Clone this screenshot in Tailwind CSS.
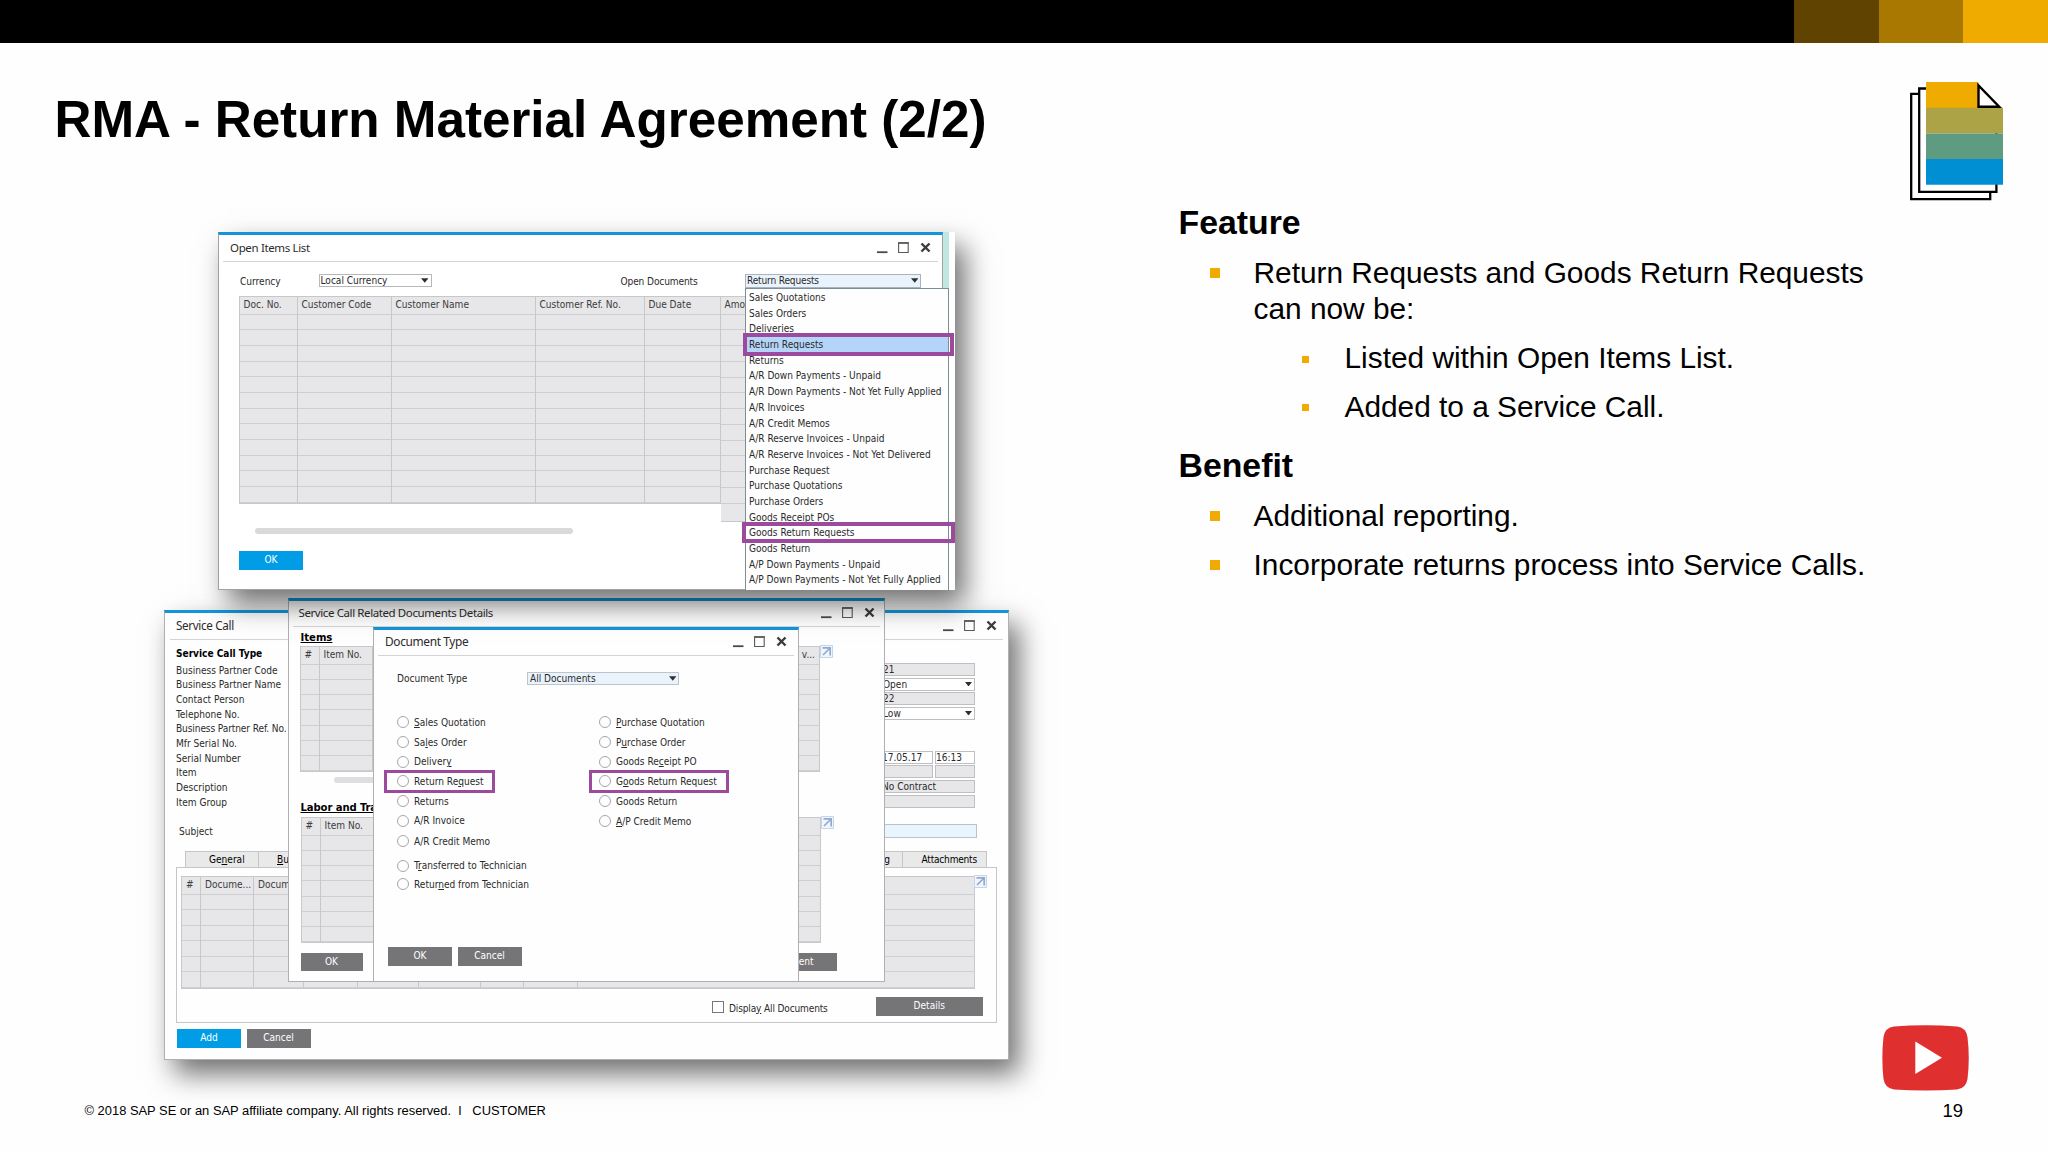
<!DOCTYPE html>
<html lang="en">
  <head>
    <meta charset="UTF-8" />
    <meta name="viewport" content="width=device-width, initial-scale=1.0" />
    <title>RMA - Return Material Agreement (2/2)</title>
    <script src="https://cdn.jsdelivr.net/npm/@tailwindcss/browser@4"></script>
    <style>
      .ui {
        font-family: "DejaVu Sans Condensed", "DejaVu Sans", sans-serif;
        font-stretch: condensed;
      }
      .win-title {
        font-family: "Noto Sans", "Open Sans", sans-serif;
      }
    </style>
  </head>
  <body class="bg-[#fefefe] text-black font-['Liberation_Sans',Arial,sans-serif]">
    <!-- shared icons -->
    <svg class="hidden">
      <symbol id="controls" viewBox="0 0 54 12">
        <path d="M0 10.2h10.5" stroke="#4a4a4a" stroke-width="1.8" />
        <path d="M21.6 .9h9.6v9.6h-9.6z" fill="none" stroke="#5a5a5a" stroke-width="1.1" />
        <path d="M21 1h10.8" stroke="#5a5a5a" stroke-width="1.6" />
        <path d="M44.500 1.500l8 8M52.500 1.500l-8 8" stroke="#3c3c3c" stroke-width="2.4" />
      </symbol>
      <symbol id="expand" viewBox="0 0 13 13">
        <path d="M.5 .5h12v12h-12z" fill="#f1f6fc" stroke="#c3d6ec" />
        <path d="M2.500 2.800h7.700v7.700M10 3L3 10" fill="none" stroke="#93a9d2" stroke-width="1.7" />
      </symbol>
      <symbol id="caret" viewBox="0 0 8 5">
        <path d="M0 0h8L4 5z" fill="#2f2f2f" />
      </symbol>
    </svg>

    <div class="relative flex h-[1152px] w-[2048px] flex-col overflow-hidden">
      <header class="flex h-[42.5px] shrink-0 bg-black">
        <div class="ml-auto w-[84.500px] bg-[#604300]"></div>
        <div class="w-[84.500px] bg-[#a97800]"></div>
        <div class="w-[85px] bg-[#f0ab00]"></div>
      </header>

      <div class="flex h-[159.500px] shrink-0 justify-between pl-[54.500px] pr-[44px]">
        <h1 class="mt-[47.500px] text-[51.200px] leading-[60px] font-bold whitespace-nowrap">RMA - Return Material Agreement (2/2)</h1>
        <svg class="mt-[37.500px] h-[122px] w-[95px]" viewBox="0 0 95 122">
          <path d="M2.200 13.800h79v105.400h-79z" fill="#fff" stroke="#000" stroke-width="2.300" />
          <path d="M10.200 8.500h77.200v103.300H10.200z" fill="#fff" stroke="#000" stroke-width="2.300" />
          <path d="M69 0h26v27.700H69z" fill="#fefefe" />
          <path d="M17 2h52.500v26H17z" fill="#f0ab00" />
          <path d="M17 27.700h77v25.700H17z" fill="#aba345" />
          <path d="M17 53.400h77v25.700H17z" fill="#5f9b80" />
          <path d="M17 79.100h77v25.700H17z" fill="#008fd3" />
          <path d="M69.500 5.500v21.200h20.700z" fill="#fff" stroke="#000" stroke-width="2.400" />
        </svg>
      </div>

      <div class="flex grow">
        <div class="w-[1178.500px] shrink-0"></div>
        <main class="flex w-[720px] flex-col text-[29.830px] leading-[35.500px]">
          <h2 class="text-[33.800px] leading-10 font-bold">Feature</h2>
          <ul class="mt-[13px] flex flex-col gap-[13.500px] pl-[31.500px]">
            <li class="flex"><span class="mt-[13px] h-[9.500px] w-[9.500px] bg-[#f0ab00]"></span><p class="ml-[34px]">Return Requests and Goods Return Requests<br />can now be:</p></li>
            <li class="flex pl-[91.500px]"><span class="mt-[16px] h-[7px] w-[7px] bg-[#f0ab00]"></span><p class="ml-9">Listed within Open Items List.</p></li>
            <li class="flex pl-[91.500px]"><span class="mt-[15.500px] h-[7px] w-[7px] bg-[#f0ab00]"></span><p class="ml-9">Added to a Service Call.</p></li>
          </ul>
          <h2 class="mt-[21px] text-[33.800px] leading-10 font-bold">Benefit</h2>
          <ul class="mt-[13px] flex flex-col gap-[13.500px] pl-[31.500px]">
            <li class="flex"><span class="mt-[13px] h-[9.500px] w-[9.500px] bg-[#f0ab00]"></span><p class="ml-[34px]">Additional reporting.</p></li>
            <li class="flex"><span class="mt-[13px] h-[9.500px] w-[9.500px] bg-[#f0ab00]"></span><p class="ml-[34px]">Incorporate returns process into Service Calls.</p></li>
          </ul>
        </main>
      </div>

      <footer class="flex h-[51px] shrink-0 justify-between pl-[84.500px] pr-[85px]">
        <p class="text-[12.920px] leading-5 whitespace-pre">© 2018 SAP SE or an SAP affiliate company. All rights reserved.  ǀ   CUSTOMER</p>
        <p class="text-[18.500px] leading-5">19</p>
      </footer>
      <svg class="absolute top-[1025px] left-[1882px] h-[66px] w-[87px]" viewBox="0 0 87 66">
        <path d="M12 1.500Q43.500 -.8 75 1.500Q84 2.500 85.500 12Q88 33 85.500 54Q84 63.500 75 64.500Q43.500 66.500 12 64.500Q3 63.500 1.500 54Q-.8 33 1.500 12Q3 2.500 12 1.500z" fill="#e02f2f" />
        <path d="M33.300 16.500v32.500L60 32.800z" fill="#fff" />
      </svg>

      <!-- Service Call window -->
      <section class="ui absolute top-[610px] left-[164px] h-[449.500px] w-[845px] border border-t-[3px] border-[#b0b0b0] border-t-[#1296db] bg-[#fefefe] text-[10.050px] text-[#2b2b2b] shadow-[10px_14px_26px_rgba(0,0,0,0.56)]">
        <div class="mx-[5px] flex h-[27px] items-center border-b border-[#d4d4d6] pr-[6px] pl-[6px]">
          <h3 class="win-title text-[11.700px] tracking-[-0.35px]">Service Call</h3>
          <svg class="ml-auto h-3 w-[54px]"><use href="#controls" /></svg>
        </div>
        <div class="flex h-[211px] justify-between pl-[11px]">
          <div class="pt-[7px] leading-[14.670px] whitespace-nowrap">
            <p class="mb-[2px] font-bold text-black">Service Call Type</p>
            <p>Business Partner Code</p>
            <p>Business Partner Name</p>
            <p>Contact Person</p>
            <p>Telephone No.</p>
            <p class="tracking-[-0.1px]">Business Partner Ref. No.</p>
            <p>Mfr Serial No.</p>
            <p>Serial Number</p>
            <p>Item</p>
            <p>Description</p>
            <p>Item Group</p>
            <p class="mt-[14.500px] ml-[3px]">Subject</p>
          </div>
          <div class="mr-[33px] flex w-[99px] flex-col gap-[1.700px] pt-[23px] leading-[11px]">
            <div class="h-[13px] border border-[#bfbfc2] bg-[#e7e6e8] pl-[6px]">21</div>
            <div class="flex h-[13px] items-center justify-between border border-[#bfbfc2] bg-white pr-[2px] pl-[6px]">Open<svg class="h-[4.500px] w-[7px]"><use href="#caret" /></svg></div>
            <div class="h-[13px] border border-[#bfbfc2] bg-[#e7e6e8] pl-[6px]">22</div>
            <div class="flex h-[13px] items-center justify-between border border-[#bfbfc2] bg-white pr-[2px] pl-[6px]">Low<svg class="h-[4.500px] w-[7px]"><use href="#caret" /></svg></div>
            <div class="mt-[29px] flex h-[13px] gap-[2px]">
              <div class="w-[57px] border border-[#bfbfc2] bg-white pl-[5px]">17.05.17</div>
              <div class="grow border border-[#bfbfc2] bg-white">16:13</div>
            </div>
            <div class="flex h-[13px] gap-[2px]">
              <div class="w-[57px] border border-[#bfbfc2] bg-[#e7e6e8]"></div>
              <div class="grow border border-[#bfbfc2] bg-[#e7e6e8]"></div>
            </div>
            <div class="h-[13px] border border-[#bfbfc2] bg-[#e7e6e8] pl-[5px]">No Contract</div>
            <div class="h-[13px] border border-[#bfbfc2] bg-[#e7e6e8]"></div>
            <div class="mt-[14px] -mr-[2px] h-[14px] border border-[#b5c4d0] bg-[#e8f5fd]"></div>
          </div>
        </div>
        <div class="mx-[11px] flex h-4 pr-[10px] pl-[9px] text-black">
          <div class="w-[74px] border border-b-0 border-[#c6c6c8] bg-[#e9e9ea] pl-[23px] leading-[15px]">Ge<u>n</u>eral</div>
          <div class="w-[300px] border-t border-[#c6c6c8] bg-[#e9e9ea] pl-[18px] leading-[15px]"><u>B</u>u</div>
          <div class="grow border-t border-r border-[#c6c6c8] bg-[#e9e9ea] pr-[12px] text-right leading-[15px]">g</div>
          <div class="w-[84px] border-t border-r border-[#c6c6c8] bg-[#e9e9ea] pl-[18.500px] tracking-[-0.2px] leading-[15px]">Attachments</div>
        </div>
        <div class="mx-[11px] h-[156px] border border-[#c6c6c8]">
          <div class="mt-[7.500px] ml-[4px] flex">
            <div class="flex h-[113px] w-[794px] border border-[#c8c8ca] bg-[#e7e6e8] leading-[15px] whitespace-nowrap text-[#3c3c3c]">
              <div class="flex w-[19px] flex-col border-r border-[#c8c8ca]"><p class="h-[18px] border-b border-[#cfcfd1] pl-1">#</p><div class="flex grow flex-col" data-rows="6"></div></div>
              <div class="flex w-[53px] flex-col border-r border-[#c8c8ca]"><p class="h-[18px] border-b border-[#cfcfd1] pl-1">Docume...</p><div class="flex grow flex-col" data-rows="6"></div></div>
              <div class="flex w-[50px] flex-col border-r border-[#c8c8ca]"><p class="h-[18px] border-b border-[#cfcfd1] pl-1">Docum</p><div class="flex grow flex-col" data-rows="6"></div></div>
              <div class="flex w-[54px] flex-col border-r border-[#c8c8ca]"><p class="h-[18px] border-b border-[#cfcfd1]"></p><div class="flex grow flex-col" data-rows="6"></div></div>
              <div class="flex w-[61px] flex-col border-r border-[#c8c8ca]"><p class="h-[18px] border-b border-[#cfcfd1]"></p><div class="flex grow flex-col" data-rows="6"></div></div>
              <div class="flex w-[62px] flex-col border-r border-[#c8c8ca]"><p class="h-[18px] border-b border-[#cfcfd1]"></p><div class="flex grow flex-col" data-rows="6"></div></div>
              <div class="flex w-[43px] flex-col border-r border-[#c8c8ca]"><p class="h-[18px] border-b border-[#cfcfd1]"></p><div class="flex grow flex-col" data-rows="6"></div></div>
              <div class="flex w-[54px] flex-col border-r border-[#c8c8ca]"><p class="h-[18px] border-b border-[#cfcfd1]"></p><div class="flex grow flex-col" data-rows="6"></div></div>
              <div class="flex grow flex-col"><p class="h-[18px] border-b border-[#cfcfd1]"></p><div class="flex grow flex-col" data-rows="6"></div></div>
            </div>
            <svg class="-mt-px -ml-px h-[13px] w-[13px]"><use href="#expand" /></svg>
          </div>
          <div class="mt-[8px] mr-[13.500px] flex items-center justify-end">
            <span class="mt-[2px] h-[12px] w-[12px] border border-[#77777a] bg-white"></span>
            <p class="mt-[4px] ml-[5px] w-[147px] tracking-[-0.15px] whitespace-nowrap">Displa<u>y</u> All Documents</p>
            <div class="h-[19px] w-[106.500px] bg-[#757477] text-center leading-[17px] text-white">Details</div>
          </div>
        </div>
        <div class="mt-[6px] ml-[12px] flex gap-[5.500px] text-center leading-[17px] text-white">
          <div class="h-[19px] w-[64px] bg-[#009de6]">Add</div>
          <div class="h-[19px] w-[64px] bg-[#757477]">Cancel</div>
        </div>
      </section>

      <!-- Service Call Related Documents Details window -->
      <section class="ui absolute top-[597.500px] left-[287.500px] h-[384.500px] w-[597.500px] border border-t-[3px] border-[#b0b0b0] border-t-[#1296db] bg-[#fefefe] text-[10.050px] text-[#3c3c3c]">
        <div class="mx-[4px] flex h-[26px] items-center border-b border-[#d4d4d6] pr-[5px] pl-[6px]">
          <h3 class="win-title text-[11.500px] tracking-[-0.4px] whitespace-nowrap text-[#2b2b2b]">Service Call Related Documents Details</h3>
          <svg class="ml-auto h-3 w-[54px]"><use href="#controls" /></svg>
        </div>
        <div class="pl-[11px]">
          <h4 class="mt-[2px] ml-[1px] h-[17.500px] text-[11.200px] leading-[17px] font-bold text-black underline">Items</h4>
          <div class="flex">
            <div class="flex h-[126px] w-[520.500px] border border-[#c8c8ca] bg-[#e7e6e8] leading-[15px]">
              <div class="flex w-[19px] flex-col border-r border-[#c8c8ca]"><p class="h-[18px] border-b border-[#cfcfd1] pl-1">#</p><div class="flex grow flex-col" data-rows="7"></div></div>
              <div class="flex w-[53px] flex-col border-r border-[#c8c8ca]"><p class="h-[18px] border-b border-[#cfcfd1] pl-1 whitespace-nowrap">Item No.</p><div class="flex grow flex-col" data-rows="7"></div></div>
              <div class="flex grow flex-col"><p class="h-[18px] border-b border-[#cfcfd1] pr-1 text-right">v...</p><div class="flex grow flex-col" data-rows="7"></div></div>
            </div>
            <svg class="-mt-px h-[13px] w-[13px]"><use href="#expand" /></svg>
          </div>
          <div class="mt-[5px] ml-[34px] h-[5.500px] w-[300px] rounded-full bg-[#dedee0]"></div>
          <h4 class="mt-[16.500px] ml-[1px] h-[18px] text-[11.200px] leading-[17px] font-bold tracking-[-0.1px] text-black underline">Labor and Travel</h4>
          <div class="ml-px flex">
            <div class="flex h-[126px] w-[520.500px] border border-[#c8c8ca] bg-[#e7e6e8] leading-[15px]">
              <div class="flex w-[19px] flex-col border-r border-[#c8c8ca]"><p class="h-[18px] border-b border-[#cfcfd1] pl-1">#</p><div class="flex grow flex-col" data-rows="7"></div></div>
              <div class="flex w-[53px] flex-col border-r border-[#c8c8ca]"><p class="h-[18px] border-b border-[#cfcfd1] pl-1 whitespace-nowrap">Item No.</p><div class="flex grow flex-col" data-rows="7"></div></div>
              <div class="flex grow flex-col"><p class="h-[18px] border-b border-[#cfcfd1]"></p><div class="flex grow flex-col" data-rows="7"></div></div>
            </div>
            <svg class="-mt-px h-[13px] w-[13px]"><use href="#expand" /></svg>
          </div>
          <div class="mt-[9.500px] mr-[47.500px] ml-px flex justify-between leading-[17px] text-white">
            <div class="h-[18px] w-[62px] bg-[#757477] text-center">OK</div>
            <div class="h-[18px] w-[110px] bg-[#757477] pr-[23px] text-right">Document</div>
          </div>
        </div>
      </section>

      <!-- Document Type window -->
      <section class="ui absolute top-[627px] left-[373px] h-[355px] w-[426px] border border-t-[3px] border-[#b0b0b0] border-t-[#1296db] bg-[#fefefe] text-[10.050px] text-[#2b2b2b]">
        <div class="mx-[4px] flex h-[26px] items-center border-b border-[#d4d4d6] pr-[7px] pb-[1px] pl-[7px]">
          <h3 class="win-title text-[11.900px] tracking-[-0.35px]">Document Type</h3>
          <svg class="ml-auto h-3 w-[54px]"><use href="#controls" /></svg>
        </div>
        <div class="mt-[15px] ml-[23px] flex items-center">
          <p class="w-[130px]">Document Type</p>
          <div class="flex h-[13.500px] w-[152px] items-center justify-between border border-[#bcc4cc] bg-[#eaf3fc] pr-[2px] pl-[2px]">All Documents<svg class="h-[5px] w-[7.500px]"><use href="#caret" /></svg></div>
        </div>
        <div class="mt-[26.500px] ml-[10px] flex whitespace-nowrap">
          <div class="flex w-[205px] flex-col">
            <label class="flex h-[19.700px] items-center gap-[5px] pl-[13px]"><span class="h-3 w-3 rounded-full border-[1.500px] border-[#a8a5a9]"></span><span><u>S</u>ales Quotation</span></label>
            <label class="flex h-[19.700px] items-center gap-[5px] pl-[13px]"><span class="h-3 w-3 rounded-full border-[1.500px] border-[#a8a5a9]"></span><span>Sa<u>l</u>es Order</span></label>
            <label class="flex h-[19.700px] items-center gap-[5px] pl-[13px]"><span class="h-3 w-3 rounded-full border-[1.500px] border-[#a8a5a9]"></span><span>Deliver<u>y</u></span></label>
            <label class="-my-[1.500px] flex h-[22.700px] w-[111px] items-center gap-[5px] border-[3px] border-[#9b4a9e] pl-[10px]"><span class="h-3 w-3 rounded-full border-[1.500px] border-[#a8a5a9]"></span><span>Return Re<u>q</u>uest</span></label>
            <label class="flex h-[19.700px] items-center gap-[5px] pl-[13px]"><span class="h-3 w-3 rounded-full border-[1.500px] border-[#a8a5a9]"></span><span>Returns</span></label>
            <label class="flex h-[19.700px] items-center gap-[5px] pl-[13px]"><span class="h-3 w-3 rounded-full border-[1.500px] border-[#a8a5a9]"></span><span>A/R Invoice</span></label>
            <label class="flex h-[20.700px] items-center gap-[5px] pl-[13px]"><span class="h-3 w-3 rounded-full border-[1.500px] border-[#a8a5a9]"></span><span>A/R Credit Memo</span></label>
            <label class="mt-[5px] flex h-[18.700px] items-center gap-[5px] pl-[13px]"><span class="h-3 w-3 rounded-full border-[1.500px] border-[#a8a5a9]"></span><span>T<u>r</u>ansferred to Technician</span></label>
            <label class="flex h-[18.700px] items-center gap-[5px] pl-[13px]"><span class="h-3 w-3 rounded-full border-[1.500px] border-[#a8a5a9]"></span><span>Retur<u>n</u>ed from Technician</span></label>
          </div>
          <div class="flex flex-col">
            <label class="flex h-[19.700px] items-center gap-[5px] pl-[10px]"><span class="h-3 w-3 rounded-full border-[1.500px] border-[#a8a5a9]"></span><span><u>P</u>urchase Quotation</span></label>
            <label class="flex h-[19.700px] items-center gap-[5px] pl-[10px]"><span class="h-3 w-3 rounded-full border-[1.500px] border-[#a8a5a9]"></span><span>P<u>u</u>rchase Order</span></label>
            <label class="flex h-[19.700px] items-center gap-[5px] pl-[10px]"><span class="h-3 w-3 rounded-full border-[1.500px] border-[#a8a5a9]"></span><span>Goods Re<u>c</u>eipt PO</span></label>
            <label class="-my-[1.700px] flex h-[23.100px] w-[140px] items-center gap-[5px] border-[3px] border-[#9b4a9e] pl-[7px]"><span class="h-3 w-3 rounded-full border-[1.500px] border-[#a8a5a9]"></span><span>G<u>o</u>ods Return Request</span></label>
            <label class="flex h-[19.700px] items-center gap-[5px] pl-[10px]"><span class="h-3 w-3 rounded-full border-[1.500px] border-[#a8a5a9]"></span><span>Goods Return</span></label>
            <label class="flex h-[20.700px] items-center gap-[5px] pl-[10px]"><span class="h-3 w-3 rounded-full border-[1.500px] border-[#a8a5a9]"></span><span><u>A</u>/P Credit Memo</span></label>
          </div>
        </div>
        <div class="mt-[53.500px] ml-[14px] flex gap-[5.500px] text-center leading-[17px] text-white">
          <div class="h-[19px] w-[64px] bg-[#757477]">OK</div>
          <div class="h-[19px] w-[64px] bg-[#757477]">Cancel</div>
        </div>
      </section>

      <!-- Open Items List window -->
      <section class="ui absolute top-[231.500px] left-[218px] h-[358.500px] w-[737px] bg-white text-[10.050px] text-[#3c3c3c] shadow-[10px_14px_26px_rgba(0,0,0,0.56)]">
        <div class="flex h-full">
          <div class="h-full w-[725px] border border-t-[3px] border-[#a2a2a2] border-t-[#1296db]">
            <div class="mx-[4px] flex h-[27.500px] items-center border-b border-[#d4d4d6] pr-[7px] pl-[7px]">
              <h3 class="win-title text-[11.500px] tracking-[-0.35px] text-[#2b2b2b]">Open Items List</h3>
              <svg class="ml-auto h-3 w-[54px]"><use href="#controls" /></svg>
            </div>
            <div class="mt-[11px] ml-[21px] flex h-[15px] items-center text-[#2b2b2b]">
              <p class="mt-[2px] w-[78.500px]">Currency</p>
              <div class="flex h-[13.500px] w-[113px] items-center justify-between border border-[#b8b8bb] bg-white pr-[2px] pl-[1px]">Local Currency<svg class="h-[5px] w-[7.500px]"><use href="#caret" /></svg></div>
              <p class="mt-[2px] ml-[189px] w-[124.500px] tracking-[-0.1px]">Open Documents</p>
              <div class="flex h-[14px] w-[176px] items-center justify-between border border-[#a9b4bf] bg-[#eaf3fc] pr-[2px] pl-[1px] tracking-[-0.15px]">Return Requests<svg class="h-[5px] w-[7.500px]"><use href="#caret" /></svg></div>
            </div>
            <div class="mt-[7.500px] ml-[19.500px] flex items-start leading-[15px] whitespace-nowrap">
              <div class="flex h-[208px] border border-[#c8c8ca] bg-[#e7e6e8]">
                <div class="flex w-[58px] flex-col border-r border-[#c8c8ca]"><p class="h-[18px] border-b border-[#cfcfd1] pl-1">Doc. No.</p><div class="flex grow flex-col" data-rows="12"></div></div>
                <div class="flex w-[94px] flex-col border-r border-[#c8c8ca]"><p class="h-[18px] border-b border-[#cfcfd1] pl-1">Customer Code</p><div class="flex grow flex-col" data-rows="12"></div></div>
                <div class="flex w-[144px] flex-col border-r border-[#c8c8ca]"><p class="h-[18px] border-b border-[#cfcfd1] pl-1">Customer Name</p><div class="flex grow flex-col" data-rows="12"></div></div>
                <div class="flex w-[109px] flex-col border-r border-[#c8c8ca]"><p class="h-[18px] border-b border-[#cfcfd1] pl-1">Customer Ref. No.</p><div class="flex grow flex-col" data-rows="12"></div></div>
                <div class="flex w-[75px] flex-col"><p class="h-[18px] border-b border-[#cfcfd1] pl-1">Due Date</p><div class="flex grow flex-col" data-rows="12"></div></div>
              </div>
              <div class="flex h-[226px] w-[40px] flex-col border border-l-0 border-[#c8c8ca] bg-[#e7e6e8]">
                <div class="flex h-[207px] flex-col"><p class="h-[18px] border-b border-[#cfcfd1] pl-1">Amo</p><div class="flex grow flex-col" data-rows="12"></div></div>
              </div>
            </div>
            <div class="mt-[6px] ml-[35.500px] h-[6px] w-[318px] rounded-full bg-[#d9d9db]"></div>
            <div class="mt-[17.500px] ml-[20px] h-[19px] w-[64px] bg-[#009de6] text-center leading-[17px] text-white">OK</div>
          </div>
          <div class="h-[57px] w-[6px] bg-[#bfe8e2]"></div>
        </div>

        <!-- opened drop-down list -->
        <ul class="absolute top-[56.500px] left-[527px] h-[302px] w-[204px] border border-b-0 border-[#7d8f96] bg-[#fefefe] pt-[1px] pl-[3px] leading-[15.680px] whitespace-nowrap text-[#2b2b2b]">
          <li>Sales Quotations</li>
          <li>Sales Orders</li>
          <li>Deliveries</li>
          <li class="-ml-[3px] bg-[#b5d5f8] pl-[3px]">Return Requests</li>
          <li>Returns</li>
          <li>A/R Down Payments - Unpaid</li>
          <li>A/R Down Payments - Not Yet Fully Applied</li>
          <li>A/R Invoices</li>
          <li>A/R Credit Memos</li>
          <li>A/R Reserve Invoices - Unpaid</li>
          <li>A/R Reserve Invoices - Not Yet Delivered</li>
          <li>Purchase Request</li>
          <li>Purchase Quotations</li>
          <li>Purchase Orders</li>
          <li>Goods Receipt POs</li>
          <li>Goods Return Requests</li>
          <li>Goods Return</li>
          <li>A/P Down Payments - Unpaid</li>
          <li>A/P Down Payments - Not Yet Fully Applied</li>
        </ul>
        <div class="absolute top-[101.500px] left-[525px] h-[23px] w-[211px] border-4 border-[#9b4a9e]"></div>
        <div class="absolute top-[290px] left-[524px] h-[21.500px] w-[213px] border-4 border-[#9b4a9e]"></div>
      </section>
    </div>

    <script>
      // empty grid rows
      document.querySelectorAll("[data-rows]").forEach((col) => {
        for (let i = 0; i < Number(col.dataset.rows); i++) {
          const row = document.createElement("div");
          row.className = "flex-1 border-b border-[#cfcfd1]";
          col.appendChild(row);
        }
      });
    </script>
  </body>
</html>
